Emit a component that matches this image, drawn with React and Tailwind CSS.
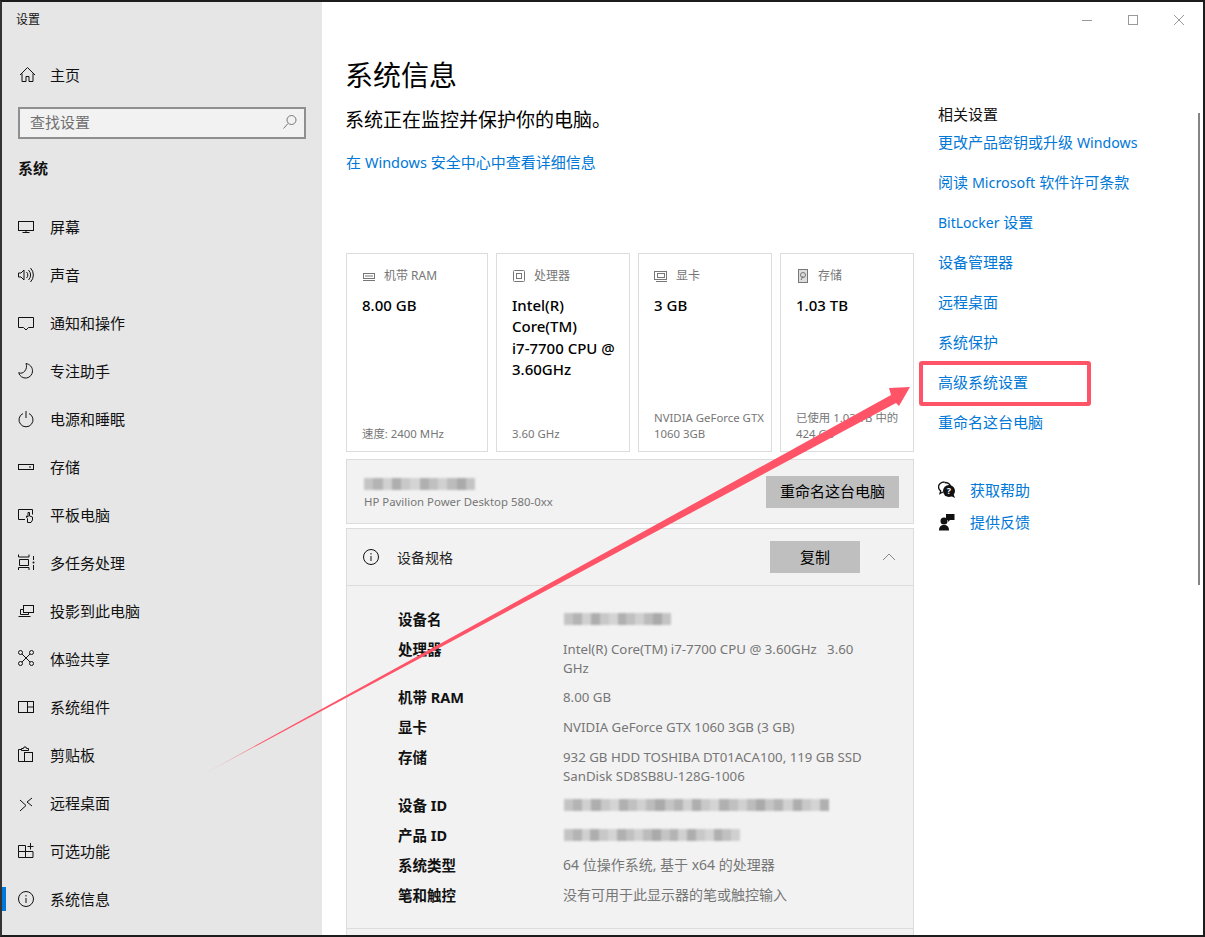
const FONT = 'font-["Noto_Sans","Noto_Sans_CJK_SC",sans-serif]'

const navIcons = {
  display: <><rect x="1.500" y="4.500" width="15" height="9" /><path d="M9 13.500v2M5.500 15.500h7" /></>,
  sound: <><path d="M1.500 8v4h2.500l3 3V5L4 8z" /><path d="M9.500 7a4 4 0 0 1 0 6M11.500 5a7 7 0 0 1 0 10M13.500 3a10 10 0 0 1 0 14" /></>,
  notify: <path d="M1.500 4.500h15v10h-5l-2.500 2.500-2.500-2.500h-5z" />,
  moon: <path d="M9 2.500c4 .8 6.500 3.700 6.500 7.300a7 7 0 0 1-13.800 1.900c4.500 2.300 9.500-3.700 7.300-9.200z" />,
  power: <><path d="M12 4.500a7 7 0 1 1-6 0" /><path d="M9 2v7" /></>,
  storage: <><rect x="1.500" y="7.500" width="15" height="5" /><path d="M12 10h2" /></>,
  tablet: <><path d="M8 14.500H1.500v-10h14v5" /><path d="M10.500 16v-2.500l-1-1v-1.500l1.500 1V7.500h1.500v3.500l3 1v3l-1.500 2.500h-3.500z" /></>,
  multi: <><path d="M1.500 1.500v2.500h10.500v-2.500M1.500 17v-2.500h10.500v2.500" /><path d="M2.500 6.500h9M2.500 12.500h9M2.500 6.500v6M11.500 6.500v6" /><path d="M16.500 3v4M16.500 12v5" /><circle cx="16.500" cy="9.500" r="1" fill="#111" stroke="none" /></>,
  project: <><rect x="6.500" y="4.500" width="10" height="7" /><path d="M6.500 8.500H3.500v5h8v-2" /><path d="M1.500 15.500h12" /></>,
  share: <><circle cx="3.500" cy="3.500" r="2" /><circle cx="14.500" cy="3.500" r="2" /><circle cx="3.500" cy="14.500" r="2" /><circle cx="14.500" cy="14.500" r="2" /><path d="M5 5l8 8M13 5l-8 8" /></>,
  parts: <><rect x="1.500" y="4.500" width="15" height="11" /><path d="M10.500 4.500v11M10.500 10h6" /></>,
  clip: <><path d="M4.500 4.500h-3v12h6" /><rect x="7.500" y="7.500" width="8" height="9" /><path d="M4.500 5.500V3.500h2l.5-1.500h2l.5 1.500h2v2h-7z" /></>,
  remote: <path d="M3 7l6 5.500L3 18M15 5l-5 4 5 4" />,
  extra: <><path d="M1.500 4.500h7v6h-7zM1.500 10.500h7v6h-7zM8.500 10.500h7.500v6H8.500z" /><path d="M13.500 2v6.500M10.500 5.500h6" /></>,
  info: <><circle cx="9" cy="10" r="7.500" /><path d="M9 9v5M9 6v1.500" /></>,
}

const navItems = [
  ['display', '屏幕'], ['sound', '声音'], ['notify', '通知和操作'], ['moon', '专注助手'], ['power', '电源和睡眠'],
  ['storage', '存储'], ['tablet', '平板电脑'], ['multi', '多任务处理'], ['project', '投影到此电脑'], ['share', '体验共享'],
  ['parts', '系统组件'], ['clip', '剪贴板'], ['remote', '远程桌面'], ['extra', '可选功能'], ['info', '系统信息'],
]

const links = [
  <>更改产品密钥或升级 <span className="text-[14.200px]">Windows</span></>,
  <>阅读 <span className="text-[14.300px]">Microsoft</span> 软件许可条款</>,
  <><span className="text-[14px]">BitLocker</span> 设置</>,
  '设备管理器', '远程桌面', '系统保护', '高级系统设置', '重命名这台电脑',
]

const latin = 'text-[13.250px]'
const cjk = 'text-[14px]'
const specs = [
  { label: '设备名', blur: 107, h: 30 },
  { label: '处理器', value: ['Intel(R) Core(TM) i7-7700 CPU @ 3.60GHz   3.60', 'GHz'], h: 48, size: latin },
  { label: '机带 RAM', value: ['8.00 GB'], h: 30, size: latin },
  { label: '显卡', value: ['NVIDIA GeForce GTX 1060 3GB (3 GB)'], h: 30, size: latin },
  { label: '存储', value: ['932 GB HDD TOSHIBA DT01ACA100, 119 GB SSD', 'SanDisk SD8SB8U-128G-1006'], h: 48, size: latin },
  { label: '设备 ID', blur: 265, h: 30 },
  { label: '产品 ID', blur: 176, h: 30 },
  { label: '系统类型', value: ['64 位操作系统, 基于 x64 的处理器'], h: 30, size: cjk },
  { label: '笔和触控', value: ['没有可用于此显示器的笔或触控输入'], h: 30, size: cjk },
]

function NavIcon({ name }) {
  return (
    <svg width="20" height="20" viewBox="0 0 20 20" fill="none" stroke="#111" strokeWidth="1" className="shrink-0">
      {navIcons[name]}
    </svg>
  )
}

// the redacted text in the screenshot, pixel blocks of grey under a blur
const shades = ['bg-[#c4c4c4]', 'bg-[#b4b4b4]', 'bg-[#d0d0d0]', 'bg-[#aeaeae]', 'bg-[#c8c8c8]', 'bg-[#d4d4d4]', 'bg-[#b0b0b0]', 'bg-[#c0c0c0]', 'bg-[#d0d0d0]', 'bg-[#bcbcbc]', 'bg-[#aaaaaa]']
function Blurred({ width }) {
  const cells = Array.from({ length: Math.round(width / 9) }, (_, i) => shades[i % shades.length])
  return (
    <div className="flex h-[12px] overflow-hidden blur-[1px]" style={{ width }}>
      {cells.map((s, i) => <div key={i} className={`flex-1 ${s}`} />)}
    </div>
  )
}

function Card({ icon, title, lines, foot, first }) {
  return (
    <div className={`flex h-[199px] flex-col justify-between border border-[#dcdcdc] bg-white pb-[9px] pl-[15px] pt-[13px] ${first ? 'w-[142px]' : 'w-[134px]'}`}>
      <div>
        <div className="flex h-[18px] items-center gap-[8px] text-[12px] leading-[18px] text-[#767676]">
          {icon}
          <span>{title}</span>
        </div>
        <div className="mt-[10px] text-[15px] font-medium leading-[21.400px] text-black">
          {lines.map(l => <div key={l} className="whitespace-nowrap">{l}</div>)}
        </div>
      </div>
      <div className="text-[11.400px] leading-[16px] text-[#767676]">
        {foot.map(l => <div key={l} className="whitespace-nowrap">{l}</div>)}
      </div>
    </div>
  )
}

export default function App() {
  return (
    <div className={`relative flex h-[937px] w-[1205px] overflow-hidden border-2 border-[#1c1c1c] border-l-[#333] bg-white ${FONT}`}>
      <aside className="flex w-[320px] shrink-0 flex-col bg-[#e6e6e6] text-[15px] text-[#111]">
        <div className="flex h-[36px] items-center pl-[14px] text-[12px]">设置</div>
        <div className="mt-[13px] flex h-[48px] items-center pl-[16px]">
          <svg width="20" height="20" viewBox="0 0 20 20" fill="none" stroke="#111" className="shrink-0">
            <path d="M2 10l7.500-7.500L17 10M4 8.500v8h4v-5h3v5h4v-8" />
          </svg>
          <span className="ml-[12px]">主页</span>
        </div>
        <div className="mx-[16px] mt-[8px] flex h-[32px] items-center justify-between border-2 border-[#8f8f8f] bg-[#f2f2f2] pb-[2px] pl-[10px] pr-[6px] text-[#707070]">
          <span>查找设置</span>
          <svg width="16" height="16" viewBox="0 0 16 16" fill="none" stroke="#777">
            <circle cx="9.500" cy="6" r="4.500" />
            <path d="M6 9.500L1.500 14.500" />
          </svg>
        </div>
        <div className="ml-[16px] mt-[11px] flex h-[36px] items-center font-bold">系统</div>
        <nav className="mt-[17px] flex flex-col">
          {navItems.map(([icon, label]) => (
            <div key={label} className="relative flex h-[48px] items-center pl-[15px]">
              {label === '系统信息' && <div className="absolute left-0 top-[12px] h-[24px] w-[4px] bg-[#0078d7]" />}
              <NavIcon name={icon} />
              <span className="ml-[13px]">{label}</span>
            </div>
          ))}
        </nav>
      </aside>

      <main className="flex min-w-0 flex-1 gap-[24px] pl-[24px]">
        <section className="w-[568px] shrink-0 pt-[55px]">
          <h1 className="-ml-px text-[28px] font-normal leading-[36px] text-black">系统信息</h1>
          <p className="-ml-px mt-[15px] text-[19px] leading-[24px] text-black">系统正在监控并保护你的电脑。</p>
          <p className="mt-[20px] text-[15px] leading-[20px] text-[#0078d7]">在 <span className="text-[14.500px]">Windows</span> 安全中心中查看详细信息</p>

          <div className="mt-[81px] flex gap-[8px]">
            <Card first title="机带 RAM" lines={['8.00 GB']} foot={['速度: 2400 MHz']} icon={
              <svg width="14" height="14" viewBox="0 0 14 14" fill="none" stroke="#777"><rect x="1.500" y="4.500" width="11" height="5" /><path d="M3 7h8M1 11.500h12" /></svg>
            } />
            <Card title="处理器" lines={['Intel(R)', 'Core(TM)', 'i7-7700 CPU @', '3.60GHz']} foot={['3.60 GHz']} icon={
              <svg width="14" height="14" viewBox="0 0 14 14" fill="none" stroke="#777"><rect x="1.500" y="1.500" width="11" height="11" rx="1" /><rect x="4.500" y="4.500" width="5" height="5" /></svg>
            } />
            <Card title="显卡" lines={['3 GB']} foot={['NVIDIA GeForce GTX', '1060 3GB']} icon={
              <svg width="14" height="14" viewBox="0 0 14 14" fill="none" stroke="#777"><rect x="0.500" y="2.500" width="12" height="8" /><rect x="3.500" y="4.500" width="7" height="4" /><path d="M2 12.500h11" /></svg>
            } />
            <Card title="存储" lines={['1.03 TB']} foot={['已使用 1.03 TB 中的', '424 GB']} icon={
              <svg width="14" height="14" viewBox="0 0 14 14" fill="none" stroke="#777"><rect x="2.500" y="0.500" width="9" height="13" fill="#ddd" /><circle cx="7" cy="6" r="2.500" /><path d="M5 11l2-4" /></svg>
            } />
          </div>

          <div className="mt-[7px] flex h-[65px] items-center justify-between border border-[#dcdcdc] bg-[#f2f2f2] pl-[17px] pr-[14px]">
            <div className="pt-[4px]">
              <Blurred width={111} />
              <div className="mt-[4px] text-[11.400px] leading-[16px] text-[#767676]">HP Pavilion Power Desktop 580-0xx</div>
            </div>
            <div className="flex h-[32px] w-[133px] items-center justify-center bg-[#bfbfbf] text-[15px] text-black">重命名这台电脑</div>
          </div>

          <div className="mt-[4px] border border-[#dcdcdc] bg-[#f2f2f2]">
            <div className="flex h-[57px] items-center border-b border-[#dcdcdc] pl-[15px]">
              <svg width="18" height="18" viewBox="0 0 18 18" fill="none" stroke="#111"><circle cx="9" cy="9" r="7.500" /><path d="M9 8v5M9 5v1.500" /></svg>
              <span className="ml-[17px] text-[14px] text-[#222]">设备规格</span>
              <div className="ml-auto flex h-[32px] w-[90px] items-center justify-center bg-[#bfbfbf] text-[15px] text-black">复制</div>
              <svg width="16" height="10" viewBox="0 0 16 10" fill="none" stroke="#888" className="ml-[21px] mr-[16px]"><path d="M2 8l6-6 6 6" /></svg>
            </div>
            <div className="pb-[18px] pl-[51px] pt-[18px]">
              {specs.map(row => (
                <div key={row.label} className="flex" style={{ height: row.h }}>
                  <div className="w-[165px] shrink-0 text-[14.500px] font-bold leading-[30px] text-[#111]">{row.label}</div>
                  {row.blur
                    ? <div className="flex h-[30px] items-center pl-[1px]"><Blurred width={row.blur} /></div>
                    : <div className={`pt-[6px] leading-[18.500px] text-[#767676] ${row.size}`}>
                        {row.value.map(l => <div key={l} className="whitespace-pre">{l}</div>)}
                      </div>}
                </div>
              ))}
            </div>
            <div className="h-[10px] border-t border-[#dcdcdc]" />
          </div>
        </section>

        <section className="flex-1">
          <div className="flex h-[36px] items-center justify-end gap-[36px] pr-[19px]">
            <div className="h-px w-[10px] bg-[#999]" />
            <div className="h-[10px] w-[10px] border border-[#999]" />
            <svg width="10" height="10" viewBox="0 0 10 10" stroke="#999"><path d="M0 0l10 10M10 0L0 10" /></svg>
          </div>
          <h2 className="mt-[66px] text-[15px] font-normal leading-[20px] text-[#111]">相关设置</h2>
          <div className="mt-[8px] flex flex-col gap-[20px] text-[15px] leading-[20px] text-[#0078d7]">
            {links.map((l, i) => <div key={i} className="h-[20px]">{l}</div>)}
          </div>
          <div className="mt-[48px] flex items-center text-[15px] leading-[20px] text-[#0078d7]">
            <svg width="18" height="18" viewBox="0 0 18 18" className="mr-[14px] shrink-0">
              <path d="M6.500 1C3 1 .5 3.300.5 6c0 1.600.9 3 2.200 4L2 12.500 5 11" fill="none" stroke="#111" strokeWidth="1.300" />
              <path d="M6.500 1.500c3 0 5.500 1.500 6 4" fill="none" stroke="#111" strokeWidth="1.300" />
              <circle cx="11" cy="10" r="6" fill="#111" />
              <path d="M13 15l4 2-1.500-4z" fill="#111" />
              <text x="11" y="13" fontSize="9" fontWeight="700" fill="#fff" textAnchor="middle">?</text>
            </svg>
            <span>获取帮助</span>
          </div>
          <div className="mt-[12px] flex items-center text-[15px] leading-[20px] text-[#0078d7]">
            <svg width="18" height="18" viewBox="0 0 18 18" fill="#111" className="mr-[14px] shrink-0">
              <circle cx="6" cy="8" r="3.500" />
              <path d="M1 17.500c0-4 2-5.500 5-5.500s5 1.500 5 5.500z" />
              <path d="M8 1h8.500v6H12L10 9V7H8z" />
            </svg>
            <span>提供反馈</span>
          </div>
        </section>
      </main>

      {/* scrollbar thumb */}
      <div className="absolute left-[1196px] top-[111px] h-[472px] w-[2px] bg-[#858585]" />

      {/* red annotation drawn on top of the screenshot */}
      <div className="absolute left-[917px] top-[359px] h-[45px] w-[172px] rounded-[3px] border-[4px] border-[#ff5468]" />
      <svg width="1205" height="937" className="pointer-events-none absolute left-[-2px] top-[-2px]">
        <defs>
          <linearGradient id="arrowFade" gradientUnits="userSpaceOnUse" x1="185" y1="784" x2="260" y2="743">
            <stop offset="0" stopColor="#ff5468" stopOpacity="0" />
            <stop offset="1" stopColor="#ff5468" />
          </linearGradient>
        </defs>
        <polygon points="202,775 891,395 889,388 910,387 899,406 896,403" fill="url(#arrowFade)" />
      </svg>
    </div>
  )
}
